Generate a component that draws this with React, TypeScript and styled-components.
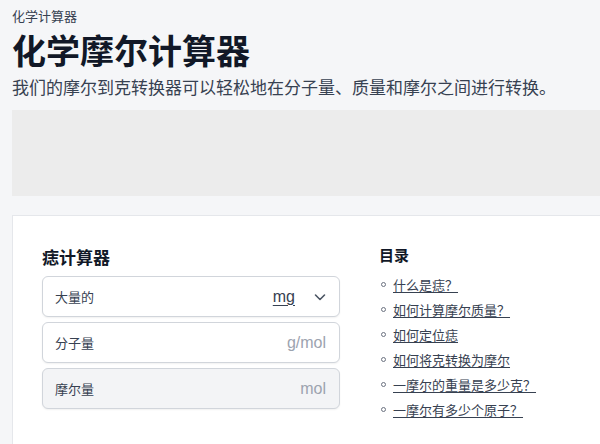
import React from "react";
import styled, { createGlobalStyle } from "styled-components";

const Global = createGlobalStyle`
  html, body { margin: 0; padding: 0; }
  body {
    background: #f5f6f8;
    font-family: "Noto Sans CJK SC", "Noto Sans", sans-serif;
    color: #111827;
    overflow: hidden;
    width: 600px;
    height: 444px;
  }
`;

const Page = styled.div`
  padding: 6px 0 0 12px;
  width: 640px;
`;

const Crumb = styled.div`
  font-size: 13px;
  line-height: 19px;
  color: #374151;
`;

const Title = styled.h1`
  margin: 0;
  font-size: 34px;
  line-height: 49px;
  font-weight: 700;
  color: #111827;
`;

const Lead = styled.p`
  margin: 0;
  font-size: 17px;
  line-height: 26px;
  color: #374151;
`;

const AdBox = styled.div`
  margin-top: 10px;
  height: 86px;
  background: #ececec;
`;

const Card = styled.div`
  margin-top: 19px;
  background: #fff;
  border: 1px solid #e5e7eb;
  border-right: none;
  padding: 28px 0 40px 29px;
  display: flex;
  gap: 39px;
`;

const Calc = styled.div`
  width: 298px;
  display: flex;
  flex-direction: column;
`;

const CalcTitle = styled.h2`
  margin: 0 0 7px;
  font-size: 17px;
  line-height: 25px;
  font-weight: 700;
  color: #111827;
`;

const Field = styled.div<{ $disabled?: boolean }>`
  height: 41px;
  box-sizing: border-box;
  border: 1.5px solid #d1d5db;
  border-radius: 6px;
  background: ${(p) => (p.$disabled ? "#f3f4f6" : "#fff")};
  box-shadow: 0 1px 2px rgba(0, 0, 0, 0.06);
  display: flex;
  align-items: center;
  padding: 0 13px 0 12px;
  margin-bottom: 5px;
`;

const Label = styled.span`
  font-size: 13px;
  color: #374151;
  flex: 1;
`;

const Unit = styled.span`
  font-family: "Liberation Sans", Arial, sans-serif;
  font-size: 16px;
  color: #9ca3af;
`;

const UnitSelect = styled.span`
  font-family: "Liberation Sans", Arial, sans-serif;
  font-size: 16px;
  color: #374151;
  text-decoration: underline;
  text-underline-offset: 3px;
  text-decoration-thickness: 1px;
  margin-right: 19px;
`;

const Toc = styled.nav`
  padding-top: 0;
`;

const TocTitle = styled.h3`
  margin: 0 0 6px;
  font-size: 15px;
  line-height: 22px;
  font-weight: 700;
  color: #111827;
`;

const TocList = styled.ul`
  margin: 0;
  padding: 0;
  list-style: none;
`;

const TocItem = styled.li`
  display: flex;
  align-items: center;
  height: 25px;
  font-size: 13px;
  color: #374151;
  &::before {
    content: "";
    width: 3px;
    height: 3px;
    border: 1px solid #6b7280;
    border-radius: 50%;
    margin: 0 7px 0 2px;
  }
`;

const TocLink = styled.a`
  color: #374151;
  text-decoration: underline;
  text-underline-offset: 2px;
`;

const Chevron = () => (
  <svg width="12" height="12" viewBox="0 0 12 12" fill="none">
    <path d="M1.5 4l4.5 4.5L10.5 4" stroke="#4b5563" strokeWidth="1.6" strokeLinecap="round" strokeLinejoin="round" />
  </svg>
);

const tocItems = [
  "什么是痣？",
  "如何计算摩尔质量？",
  "如何定位痣",
  "如何将克转换为摩尔",
  "一摩尔的重量是多少克？",
  "一摩尔有多少个原子？",
];

export default function App() {
  return (
    <>
      <Global />
      <Page>
        <Crumb>化学计算器</Crumb>
        <Title>化学摩尔计算器</Title>
        <Lead>我们的摩尔到克转换器可以轻松地在分子量、质量和摩尔之间进行转换。</Lead>
        <AdBox />
        <Card>
          <Calc>
            <CalcTitle>痣计算器</CalcTitle>
            <Field>
              <Label>大量的</Label>
              <UnitSelect>mg</UnitSelect>
              <Chevron />
            </Field>
            <Field>
              <Label>分子量</Label>
              <Unit>g/mol</Unit>
            </Field>
            <Field $disabled>
              <Label>摩尔量</Label>
              <Unit>mol</Unit>
            </Field>
          </Calc>
          <Toc>
            <TocTitle>目录</TocTitle>
            <TocList>
              {tocItems.map((t) => (
                <TocItem key={t}>
                  <TocLink href="#">{t}</TocLink>
                </TocItem>
              ))}
            </TocList>
          </Toc>
        </Card>
      </Page>
    </>
  );
}
